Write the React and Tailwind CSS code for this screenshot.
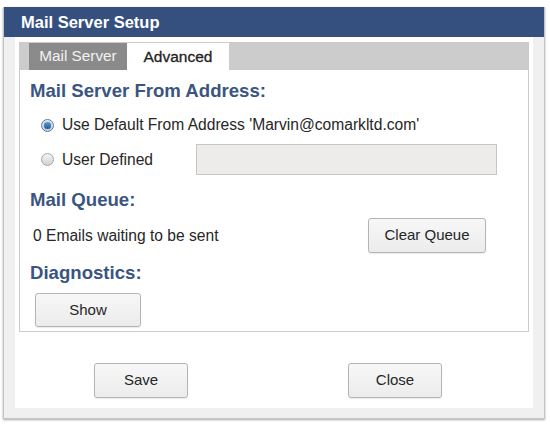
import React from "react";

function Radio({ checked }) {
  return checked ? (
    <span className="inline-flex items-center justify-center w-[13px] h-[13px] rounded-full border border-[#5b7a99] bg-gradient-to-b from-[#e8eef4] to-[#c9d3dd]">
      <span className="w-[7px] h-[7px] rounded-full bg-gradient-to-b from-[#5d9ad6] to-[#1f5a96] shadow-[0_0_1px_#1f4f80]" />
    </span>
  ) : (
    <span className="inline-block w-[13px] h-[13px] rounded-full border border-[#a5a5a5] bg-gradient-to-b from-[#f4f4f4] to-[#d2d2d2]" />
  );
}

function Btn({ children, className = "" }) {
  return (
    <button
      className={
        "flex items-center justify-center rounded-[3px] border border-[#b4b4b4] bg-gradient-to-b from-[#f7f7f7] to-[#ececec] text-[15px] text-[#262626] shadow-[0_1px_1px_rgba(0,0,0,0.08)] " +
        className
      }
    >
      {children}
    </button>
  );
}

export default function App() {
  return (
    <div className="w-[550px] h-[430px] bg-white pt-[7px] pl-[3px] font-['Liberation_Sans',Arial,sans-serif]">
      <div className="w-[542px] border-l border-r border-b border-[#c4c4c4] shadow-[0_1px_2px_rgba(0,0,0,0.35)]">
        <div className="h-[30px] bg-[#35507f] flex items-center pl-[17px] text-white font-bold text-[16.5px]">
          Mail Server Setup
        </div>
        <div className="bg-[#f0f0f0] pl-[11px] pr-[11px] pb-[10px]">
          <div className="bg-white h-[371px] pt-[5px] px-[4px]">
            <div className="h-[290px] border border-[#cbcbcb] flex flex-col">
              <div className="h-[27px] bg-[#cccccc] flex pl-[9px] shrink-0">
                <div className="w-[98px] bg-[#8a8a8a] text-[#f2f2f2] text-[15.3px] flex items-center justify-center">
                  Mail Server
                </div>
                <div className="w-[102px] bg-white text-[#222] text-[15.5px] flex items-center justify-center [-webkit-text-stroke:0.3px_#222]">
                  Advanced
                </div>
              </div>
              <div className="flex flex-col">
                <div className="mt-[9px] h-[24px] flex items-center pl-[10px] text-[18.6px] font-bold text-[#3a5580]">
                  Mail Server From Address:
                </div>
                <div className="mt-[10px] h-[24px] flex items-center pl-[21px] text-[15.6px] text-[#262626]">
                  <Radio checked />
                  <span className="ml-[8px]">Use Default From Address 'Marvin@comarkltd.com'</span>
                </div>
                <div className="mt-[7px] h-[31px] flex items-center pl-[21px] text-[15.6px] text-[#262626]">
                  <Radio />
                  <span className="ml-[8px] w-[134px]">User Defined</span>
                  <div className="w-[301px] h-[31px] bg-[#edecea] border border-[#c6c6c6]" />
                </div>
                <div className="mt-[13px] h-[24px] flex items-center pl-[10px] text-[18.6px] font-bold text-[#3a5580]">
                  Mail Queue:
                </div>
                <div className="mt-[6px] h-[35px] flex items-center pl-[13px] text-[15.6px] text-[#262626]">
                  <span className="w-[335px]">0 Emails waiting to be sent</span>
                  <Btn className="w-[118px] h-[35px]">Clear Queue</Btn>
                </div>
                <div className="mt-[8px] h-[24px] flex items-center pl-[10px] text-[18.6px] font-bold text-[#3a5580]">
                  Diagnostics:
                </div>
                <div className="mt-[8px] pl-[15px]">
                  <Btn className="w-[106px] h-[34px]">Show</Btn>
                </div>
              </div>
            </div>
            <div className="mt-[31px] flex pl-[75px]">
              <Btn className="w-[94px] h-[35px]">Save</Btn>
              <Btn className="w-[94px] h-[35px] ml-[160px]">Close</Btn>
            </div>
          </div>
        </div>
      </div>
    </div>
  );
}
